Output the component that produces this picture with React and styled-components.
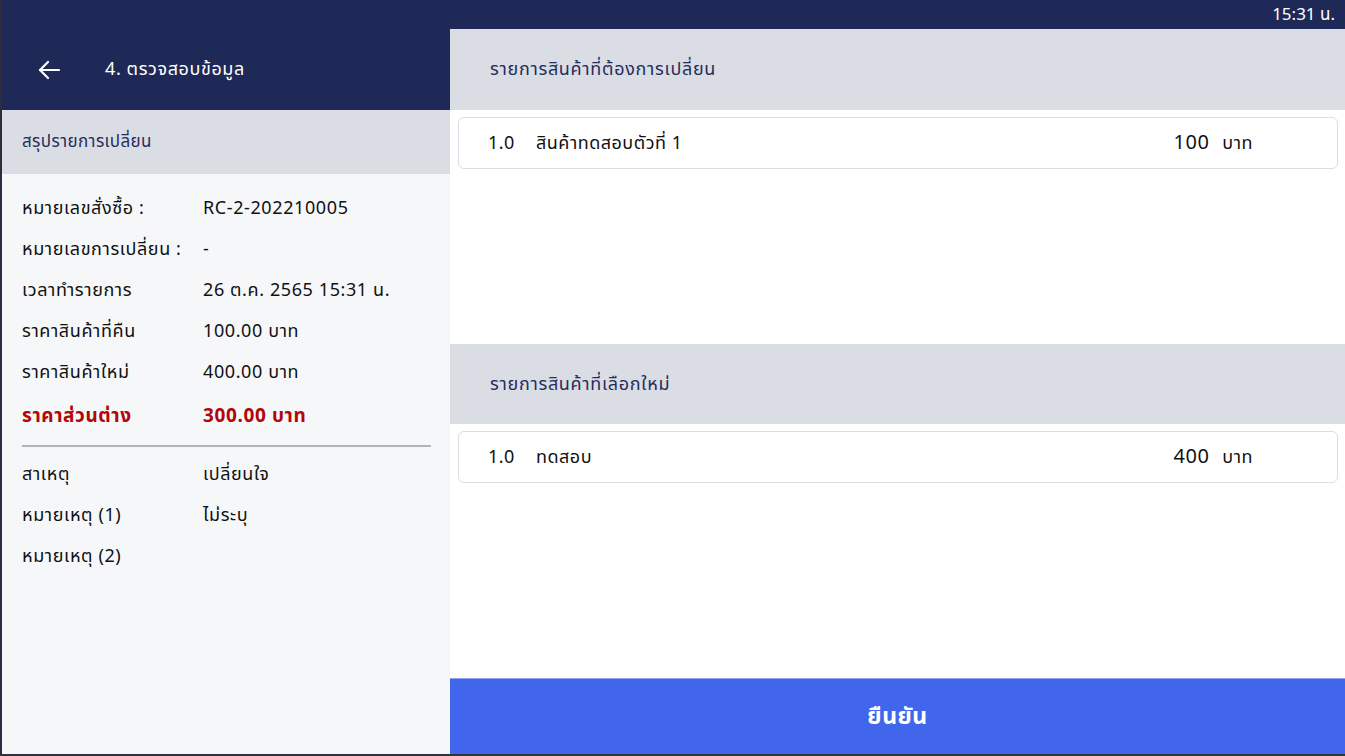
import React from "react"
import styled, { createGlobalStyle } from "styled-components"

const GlobalStyle = createGlobalStyle`
  html, body {
    margin: 0;
    padding: 0;
    background: #ffffff;
  }
  body {
    font-family: "Noto Sans Thai", "Noto Sans", "Liberation Sans", sans-serif;
    color: #111111;
  }
  * {
    box-sizing: border-box;
  }
`

const summary = [
  { label: "หมายเลขสั่งซื้อ :", value: "RC-2-202210005" },
  { label: "หมายเลขการเปลี่ยน :", value: "-" },
  { label: "เวลาทำรายการ", value: "26 ต.ค. 2565 15:31 น." },
  { label: "ราคาสินค้าที่คืน", value: "100.00 บาท" },
  { label: "ราคาสินค้าใหม่", value: "400.00 บาท" },
]

const notes = [
  { label: "สาเหตุ", value: "เปลี่ยนใจ" },
  { label: "หมายเหตุ (1)", value: "ไม่ระบุ" },
  { label: "หมายเหตุ (2)", value: "" },
]

const returnItems = [{ no: "1.0", name: "สินค้าทดสอบตัวที่ 1", price: "100" }]
const newItems = [{ no: "1.0", name: "ทดสอบ", price: "400" }]

const BackArrow = () => (
  <svg width="24" height="22" viewBox="0 0 24 22" fill="none">
    <path d="M22 11H3" stroke="#ffffff" strokeWidth="2.2" strokeLinecap="round" />
    <path d="M11 3L3 11L11 19" stroke="#ffffff" strokeWidth="2.2" strokeLinecap="round" strokeLinejoin="round" />
  </svg>
)

function ItemRow({ item }) {
  return (
    <Card>
      <ItemNo>{item.no}</ItemNo>
      <ItemName>{item.name}</ItemName>
      <Price>{item.price}</Price>
      <Unit>บาท</Unit>
    </Card>
  )
}

export default function App() {
  return (
    <>
      <GlobalStyle />
      <Frame>
        <StatusBar>15:31 น.</StatusBar>
        <Main>
          <LeftPanel>
            <TitleBar>
              <BackButton aria-label="back">
                <BackArrow />
              </BackButton>
              <Title>4. ตรวจสอบข้อมูล</Title>
            </TitleBar>
            <SubHeader>สรุปรายการเปลี่ยน</SubHeader>
            <SummaryBody>
              {summary.map((row) => (
                <InfoRow key={row.label}>
                  <Label>{row.label}</Label>
                  <Value>{row.value}</Value>
                </InfoRow>
              ))}
              <InfoRow $highlight>
                <Label>ราคาส่วนต่าง</Label>
                <Value>300.00 บาท</Value>
              </InfoRow>
              <Divider />
              {notes.map((row) => (
                <InfoRow key={row.label}>
                  <Label>{row.label}</Label>
                  <Value>{row.value}</Value>
                </InfoRow>
              ))}
            </SummaryBody>
          </LeftPanel>

          <RightPanel>
            <SectionHeader $height={81}>รายการสินค้าที่ต้องการเปลี่ยน</SectionHeader>
            <ItemList $height={234}>
              {returnItems.map((item) => (
                <ItemRow key={item.no + item.name} item={item} />
              ))}
            </ItemList>
            <SectionHeader $height={80}>รายการสินค้าที่เลือกใหม่</SectionHeader>
            <ItemList $grow>
              {newItems.map((item) => (
                <ItemRow key={item.no + item.name} item={item} />
              ))}
            </ItemList>
            <ConfirmButton>ยืนยัน</ConfirmButton>
          </RightPanel>
        </Main>
      </Frame>
    </>
  )
}

const Frame = styled.div`
  width: 1345px;
  height: 756px;
  display: grid;
  grid-template-rows: 29px 1fr;
  border-left: 2px solid #2b2d3c;
  border-bottom: 2px solid #30323f;
  overflow: hidden;
`

const StatusBar = styled.div`
  background: #1f2958;
  color: #ffffff;
  font-size: 17px;
  display: flex;
  align-items: center;
  justify-content: flex-end;
  padding-right: 10px;
`

const Main = styled.div`
  display: grid;
  grid-template-columns: 448px 1fr;
  min-height: 0;
`

const LeftPanel = styled.div`
  display: flex;
  flex-direction: column;
  background: #f6f7f9;
`

const TitleBar = styled.div`
  height: 81px;
  background: #1f2958;
  display: flex;
  align-items: center;
  padding-left: 35px;
  gap: 44px;
`

const BackButton = styled.div`
  display: flex;
  align-items: center;
  width: 24px;
  height: 22px;
`

const Title = styled.div`
  color: #ffffff;
  font-size: 18px;
  letter-spacing: 0.6px;
`

const SubHeader = styled.div`
  height: 64px;
  background: #dadde4;
  color: #262d5e;
  font-size: 17px;
  letter-spacing: 0.4px;
  display: flex;
  align-items: center;
  padding-left: 20px;
`

const SummaryBody = styled.div`
  flex: 1;
  padding: 14px 19px 0 20px;
`

const InfoRow = styled.div`
  display: grid;
  grid-template-columns: 181px 1fr;
  align-items: center;
  height: ${(p) => (p.$highlight ? "46px" : "41px")};
  font-size: ${(p) => (p.$highlight ? "19px" : "18px")};
  letter-spacing: 0.6px;
  font-weight: ${(p) => (p.$highlight ? 700 : 400)};
  color: ${(p) => (p.$highlight ? "#b30606" : "#111111")};
`

const Label = styled.span`
  white-space: nowrap;
`

const Value = styled.span`
  white-space: nowrap;
`

const Divider = styled.div`
  height: 2px;
  background: #b4b4b8;
  margin: 6px 0 7px;
`

const RightPanel = styled.div`
  display: flex;
  flex-direction: column;
  background: #ffffff;
  min-height: 0;
`

const SectionHeader = styled.div`
  height: ${(p) => p.$height}px;
  flex-shrink: 0;
  background: #dadde4;
  color: #262d5e;
  font-size: 18px;
  letter-spacing: 0.7px;
  display: flex;
  align-items: center;
  padding-left: 40px;
`

const ItemList = styled.div`
  ${(p) => (p.$grow ? "flex: 1;" : `height: ${p.$height}px; flex-shrink: 0;`)}
  padding: 7px 7px 0 8px;
  display: flex;
  flex-direction: column;
  gap: 7px;
`

const Card = styled.div`
  height: 52px;
  border: 1.5px solid #dcdde3;
  border-radius: 6px;
  display: flex;
  align-items: center;
  padding: 0 84px 0 29px;
  font-size: 18px;
  letter-spacing: 0.5px;
  color: #111111;
`

const ItemNo = styled.span`
  width: 48px;
`

const ItemName = styled.span`
  flex: 1;
`

const Price = styled.span`
  font-size: 20px;
`

const Unit = styled.span`
  margin-left: 13px;
`

const ConfirmButton = styled.button`
  height: 76px;
  flex-shrink: 0;
  border: none;
  border-top: 1px solid #8fa3f3;
  background: #4166eb;
  color: #ffffff;
  font-family: inherit;
  font-size: 23px;
  font-weight: 700;
  letter-spacing: 0.5px;
  cursor: pointer;
`
